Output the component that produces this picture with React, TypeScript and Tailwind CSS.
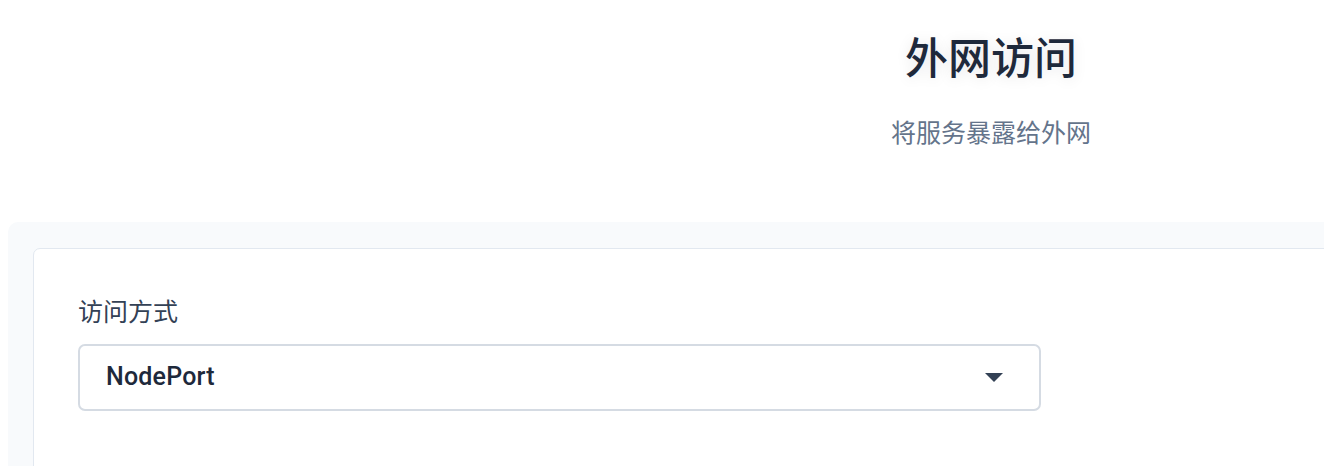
const SANS = "font-['Liberation_Sans','Noto_Sans_CJK_SC',sans-serif]"

function ChevronDown() {
  return (
    <svg width="18" height="9" viewBox="0 0 18 9" className="shrink-0">
      <path d="M0 0 H18 L9 9 Z" fill="#334155" />
    </svg>
  )
}

export default function App() {
  return (
    <div className={`h-[466px] w-screen overflow-hidden bg-white ${SANS}`}>
      <div className="w-[1982px]">
        <div className="flex flex-col items-center pt-[34px]">
          <h1 className="text-[43px] font-medium leading-[1.2] text-[#1e293b] [text-shadow:0_2px_14px_rgba(15,23,42,0.1)]">
            外网访问
          </h1>
          <p className="mt-[29px] text-[25px] leading-[1.5] text-[#64748b]">将服务暴露给外网</p>
        </div>

        <div className="ml-[8px] mt-[70px] rounded-[10px] bg-[#f8fafc] pl-[25px] pt-[26px]">
          <div className="h-[300px] rounded-[7px] border border-[#e2e8f0] bg-white px-[44px] pt-[45px]">
            <label className="block text-[25px] leading-[1.5] text-[#334155]">访问方式</label>
            <div className="mt-[12px] flex h-[67px] w-[963px] items-center justify-between rounded-[7px] border-2 border-[#d5dbe3] pl-[26px] pr-[36px]">
              <span className="font-['Roboto',sans-serif] text-[25px] font-medium tracking-[0.2px] text-[#1e293b]">
                NodePort
              </span>
              <ChevronDown />
            </div>
          </div>
        </div>
      </div>
    </div>
  )
}
